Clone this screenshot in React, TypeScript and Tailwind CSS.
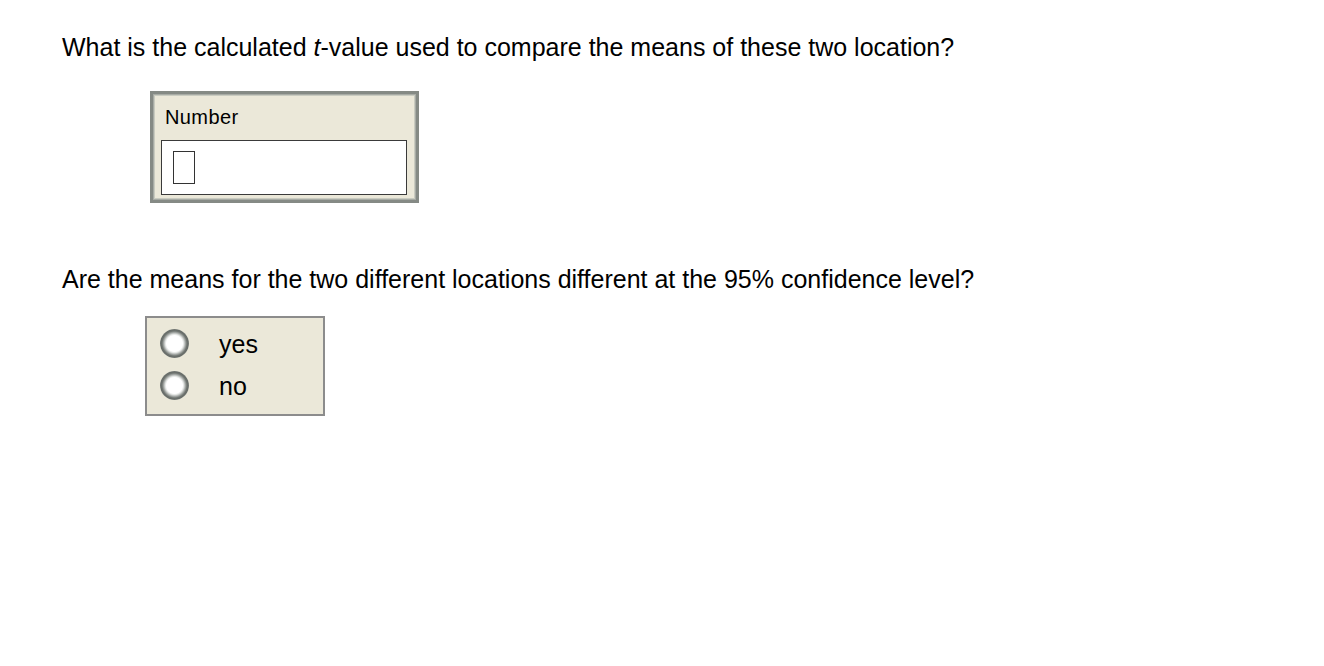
export default function App() {
  return (
    <div className="min-h-screen bg-white pt-[33px] pl-[62px] text-black font-['Liberation_Sans',Arial,sans-serif]">
      <p className="text-[25px] leading-[28px]">
        What is the calculated <i>t</i>-value used to compare the means of these two location?
      </p>

      <div className="mt-[30px] ml-[88px] w-[269px] h-[112px] border-[3px] border-[#858a85] shadow-[inset_0_0_0_1px_#a7aba5,inset_0_0_0_2px_#c9cbc0] bg-[#ebe8d9] px-[8px] pt-[12px]">
        <div className="pl-[4px] text-[20px] leading-[22px] tracking-[0.4px]">Number</div>
        <div className="mt-[12px] h-[55px] w-[246px] border-[1.5px] border-[#3a3a3a] bg-white pl-[11px] pt-[10px]">
          <div className="h-[33px] w-[22px] border border-[#333] bg-white" />
        </div>
      </div>

      <p className="mt-[62px] text-[25px] leading-[28px]">
        Are the means for the two different locations different at the 95% confidence level?
      </p>

      <div className="mt-[23px] ml-[83px] w-[180px] h-[100px] border-2 border-[#8c8c8c] bg-[#ebe8d9] pl-[13px] pt-[11px] flex flex-col gap-[13px]">
        {["yes", "no"].map((label) => (
          <label key={label} className="flex items-center gap-[30px] text-[25px] leading-[28px]">
            <span className="block h-[29px] w-[29px] shrink-0 rounded-full bg-[radial-gradient(circle_closest-side,#ffffff_0%,#ffffff_55%,#e2e4e2_64%,#a5a9a6_75%,#6f7470_86%,#666b67_95%,#8c908c_100%)]" />
            <span>{label}</span>
          </label>
        ))}
      </div>
    </div>
  );
}
